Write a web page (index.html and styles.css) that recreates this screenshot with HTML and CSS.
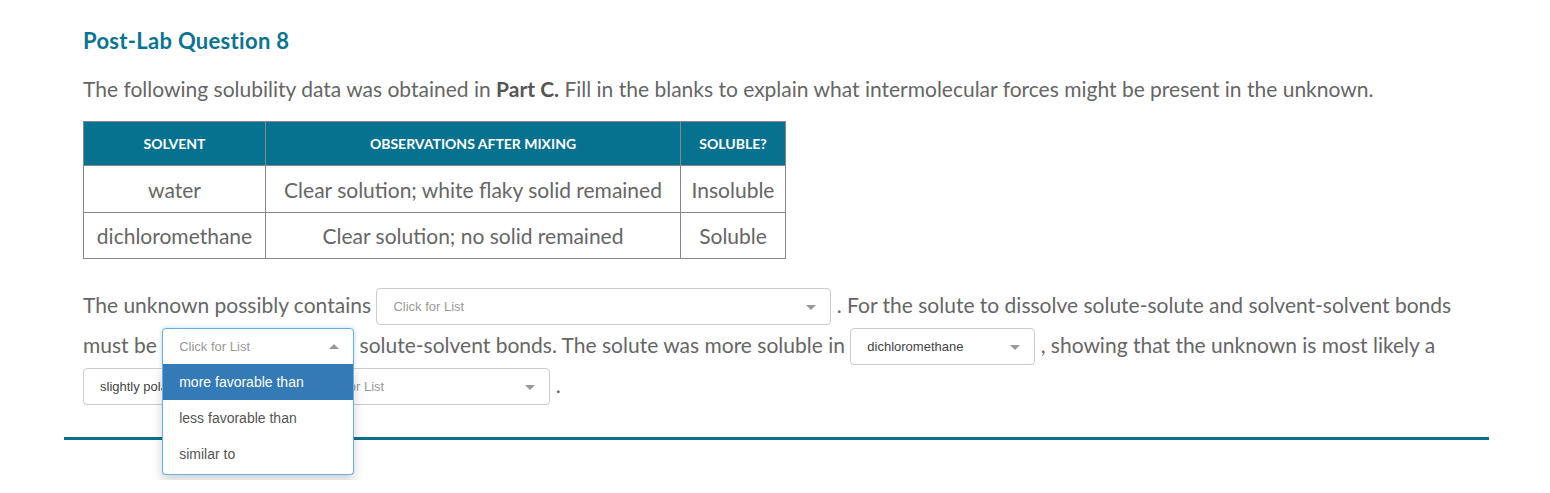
FILE: index.html
```html
<!DOCTYPE html>
<html>
<head>
<meta charset="utf-8">
<link rel="stylesheet" href="styles.css">
</head>
<body>
<div class="page">
  <div class="content">
    <h2 class="title">Post-Lab Question 8</h2>
    <p class="intro">The following solubility data was obtained in <b>Part C.</b> Fill in the blanks to explain what intermolecular forces might be present in the unknown.</p>
    <table class="data">
      <thead>
        <tr><th class="c1">Solvent</th><th class="c2">Observations after mixing</th><th class="c3">Soluble?</th></tr>
      </thead>
      <tbody>
        <tr><td>water</td><td>Clear solution; white flaky solid remained</td><td>Insoluble</td></tr>
        <tr><td>dichloromethane</td><td>Clear solution; no solid remained</td><td>Soluble</td></tr>
      </tbody>
    </table>
    <p class="fill">The unknown possibly contains <span class="sel w1"><span class="ph">Click for List</span><span class="caret"></span></span> . For the solute to dissolve solute-solute and solvent-solvent bonds must be <span class="sel w2 open"><span class="ph">Click for List</span><span class="caret up"></span><span class="menu"><span class="opt active">more favorable than</span><span class="opt">less favorable than</span><span class="opt">similar to</span></span></span> solute-solvent bonds. The solute was more soluble in <span class="sel w3"><span class="val">dichloromethane</span><span class="caret"></span></span> , showing that the unknown is most likely a <span class="sel w4"><span class="val">slightly polar</span><span class="caret"></span></span> <span class="sel w5"><span class="ph">Click for List</span><span class="caret"></span></span> .</p>
  </div>
  <hr class="rule">
</div>
</body>
</html>
```
FILE: styles.css
```css
html, body { margin: 0; padding: 0; background: #fff; }
body { font-family: "Lato", "Open Sans", sans-serif; color: #666; }
.page { padding: 0 61px 40px 64px; }
.content { padding: 27px 19px 0 19px; }
.title { margin: 0; font-size: 22px; font-weight: 700; color: #0a7492; letter-spacing: 0.3px; line-height: 28px; }
.intro { margin: 21px 0 0; font-size: 21px; line-height: 26px; }
.intro b { color: #555; }
.data { border-collapse: collapse; table-layout: fixed; width: 699px; margin-top: 19px; font-size: 21px; }
.data th { background: #06728f; color: #fff; font-size: 14px; font-weight: 700; text-transform: uppercase; height: 43px; padding: 0; border: 1px solid #888; }
.data td { height: 45px; padding: 0; text-align: center; border: 1px solid #888; white-space: nowrap; }
.data tbody tr:first-child td { height: 46px; }
.data .c1 { width: 181px; }
.data .c2 { width: 414px; }
.data .c3 { width: 104px; }
.fill { margin: 26px 0 0; font-size: 21px; line-height: 40px; }
.sel { display: inline-block; position: relative; height: 37px; box-sizing: border-box; border: 1px solid #ccc; border-radius: 4px; vertical-align: top; font-family: "Liberation Sans", Arial, sans-serif; font-size: 13px; line-height: 35px; padding: 0 16px; margin: 3px 0 -3px; background: #fff; }
.w1 { width: 455px; }
.w2 { width: 192px; }
.w3 { width: 185px; }
.w4 { width: 208px; }
.w5 { width: 254px; }
.ph { color: #999; }
.val { color: #444; }
.caret { position: absolute; right: 14px; top: 16px; width: 0; height: 0; border-left: 5px solid transparent; border-right: 5px solid transparent; border-top: 5px solid #999; }
.caret.up { border-top: 0; border-bottom: 5px solid #999; top: 15px; }
.open { border-color: #66afe9; border-radius: 4px 4px 0 0; z-index: 2; box-shadow: 0 0 4px rgba(102,175,233,0.5); }
.menu { position: absolute; left: -1px; top: 35px; width: 192px; box-sizing: border-box; background: #fff; border: 1px solid #66afe9; border-top: 0; border-radius: 0 0 4px 4px; box-shadow: 0 6px 12px rgba(0,0,0,0.18); font-size: 14px; line-height: 36px; display: flex; flex-direction: column; padding-bottom: 2px; }
.opt { padding: 0 16px; color: #555; }
.opt.active { background: #337ab7; color: #fff; }
.rule { margin: 32px 0 0; border: 0; height: 3px; background: #07728f; }
```
